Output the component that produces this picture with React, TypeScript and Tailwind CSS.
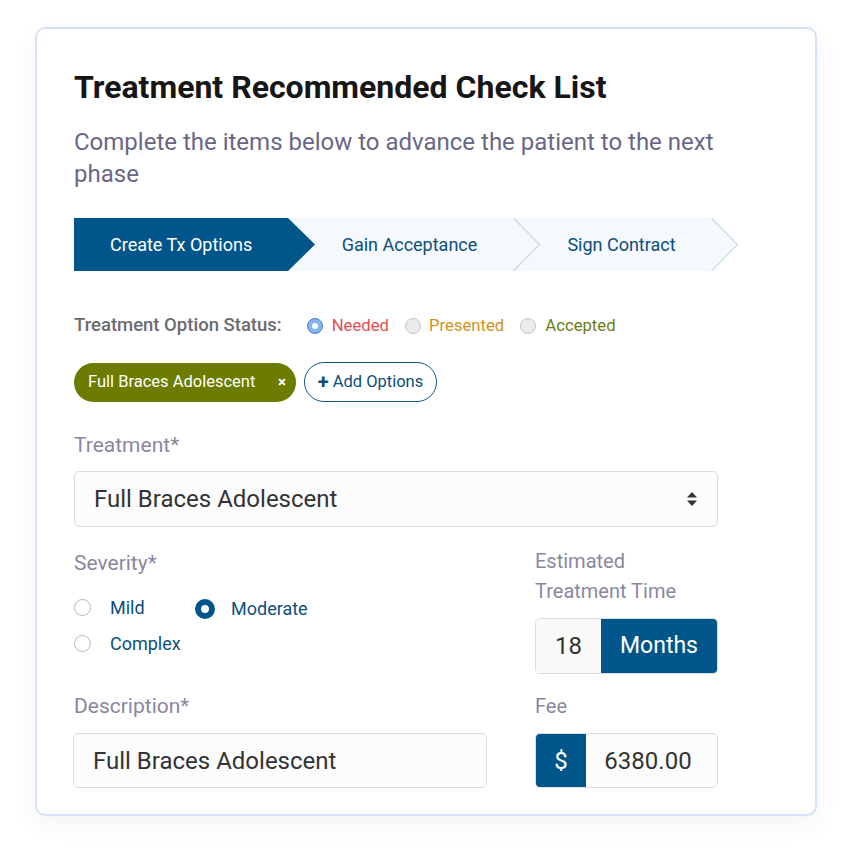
import React from "react";

const Radio = ({ checked, variant }: { checked?: boolean; variant: "light" | "dark" | "plain" }) => {
  if (variant === "light") {
    return checked ? (
      <span className="inline-flex h-[16px] w-[16px] shrink-0 items-center justify-center rounded-full border border-[#3f7fd0] bg-[#86b6ef]">
        <span className="h-[6px] w-[6px] rounded-full bg-white" />
      </span>
    ) : (
      <span className="inline-block h-[16px] w-[16px] shrink-0 rounded-full border border-[#c4c4c9] bg-[#ebebee]" />
    );
  }
  if (variant === "dark") {
    return <span className="inline-block h-[20px] w-[20px] shrink-0 rounded-full border-[6px] border-[#00568a] bg-white" />;
  }
  return <span className="inline-block h-[17px] w-[17px] shrink-0 rounded-full border border-[#b5b5b5] bg-white" />;
};

export default function App() {
  return (
    <div className="min-h-[862px] w-[852px] bg-white pl-[35px] pt-[27px]" style={{ fontFamily: "Roboto, 'Noto Sans', sans-serif" }}>
      <div className="h-[789px] w-[782px] rounded-[10px] border-2 border-[#d7e2f8] bg-white pl-[37px] pt-[39px] shadow-[0_8px_24px_rgba(30,50,90,0.06)]">
        <h1 className="text-[32px] font-bold leading-[38px] text-[#161616]">Treatment Recommended Check List</h1>
        <p className="mt-[20px] w-[690px] text-[24px] leading-[32px] text-[#6a6785]">
          Complete the items below to advance the patient to the next phase
        </p>

        {/* Stepper */}
        <div className="mt-[28px] flex h-[53px] w-[664px]">
          <div className="flex h-[53px] w-[241px] items-center bg-[#f5f8fc]">
            <div className="flex h-[53px] w-[241px] items-center bg-[#00568a] pl-[36px] text-[18px] text-white [clip-path:polygon(0_0,214px_0,100%_50%,214px_100%,0_100%)]">
              Create Tx Options
            </div>
          </div>
          <div className="flex h-[53px] w-[198px] items-center justify-center bg-[#f5f8fc] pr-[9px] text-[18px] text-[#0d4f7a]">
            Gain Acceptance
          </div>
          <svg width="27" height="53" viewBox="0 0 27 53" className="shrink-0">
            <rect x="0" y="0" width="27" height="53" fill="#f5f8fc" />
            <polyline points="0.5,0 26.5,26.5 0.5,53" fill="none" stroke="#c3dbe4" strokeWidth="1.2" />
          </svg>
          <div className="flex h-[53px] w-[171px] items-center justify-center bg-[#f5f8fc] pr-[8px] text-[18px] text-[#0d4f7a]">
            Sign Contract
          </div>
          <svg width="27" height="53" viewBox="0 0 27 53" className="shrink-0">
            <polygon points="0,0 26.5,26.5 0,53" fill="#f5f8fc" />
            <polyline points="0.5,0 26.5,26.5 0.5,53" fill="none" stroke="#c3dbe4" strokeWidth="1.2" />
          </svg>
        </div>

        {/* Status */}
        <div className="mt-[44px] flex h-[22px] items-center">
          <span className="text-[18.5px] font-medium text-[#6b6b70]">Treatment Option Status:</span>
          <span className="ml-[25px] flex items-center text-[16.7px]">
            <Radio variant="light" checked />
            <span className="ml-[9px] text-[#e0524f]">Needed</span>
          </span>
          <span className="ml-[16px] flex items-center text-[16.7px]">
            <Radio variant="light" />
            <span className="ml-[8px] text-[#d3921d]">Presented</span>
          </span>
          <span className="ml-[16px] flex items-center text-[16.7px]">
            <Radio variant="light" />
            <span className="ml-[9px] text-[#6a7d12]">Accepted</span>
          </span>
        </div>

        {/* Pills */}
        <div className="mt-[25px] flex items-center gap-[8px]">
          <div className="flex h-[39px] w-[222px] items-center justify-between rounded-full bg-[#6b7c00] pl-[14px] pr-[10px] text-[16.5px] text-white">
            <span>Full Braces Adolescent</span>
            <span className="text-[15px] font-bold">×</span>
          </div>
          <div className="flex h-[40px] w-[133px] items-center justify-center rounded-full border border-[#0b5a8a] text-[16.5px] text-[#0b4f7c]">
            <span className="mr-[4px] text-[20px] font-bold leading-none">+</span>Add Options
          </div>
        </div>

        {/* Treatment */}
        <div className="mt-[31px] text-[21px] leading-[24px] text-[#8a879f]">Treatment*</div>
        <div className="mt-[14px] flex h-[56px] w-[644px] items-center justify-between rounded-[5px] border border-[#dcdcdc] bg-[#fcfcfc] pl-[19px] pr-[20px] text-[24px] text-[#333]">
          <span>Full Braces Adolescent</span>
          <svg width="10" height="14" viewBox="0 0 10 14">
            <polygon points="5,0 10,5.5 0,5.5" fill="#333" />
            <polygon points="0,8.5 10,8.5 5,14" fill="#333" />
          </svg>
        </div>

        {/* Severity / Time */}
        <div className="mt-[20px] grid grid-cols-[413px_183px] gap-x-[48px]">
          <div>
            <div className="mt-[4px] text-[21px] leading-[24px] text-[#8a879f]">Severity*</div>
            <div className="mt-[22px] flex text-[18px] text-[#0d4f7a]">
              <div className="flex w-[121px] flex-col gap-[15px]">
                <div className="flex h-[21px] items-center">
                  <Radio variant="plain" />
                  <span className="ml-[19px] leading-[21px]">Mild</span>
                </div>
                <div className="flex h-[21px] items-center">
                  <Radio variant="plain" />
                  <span className="ml-[19px] leading-[21px]">Complex</span>
                </div>
              </div>
              <div className="mt-[1px] flex h-[21px] items-center">
                <Radio variant="dark" />
                <span className="ml-[16px] leading-[21px]">Moderate</span>
              </div>
            </div>
          </div>
          <div>
            <div className="-mt-[1px] text-[20px] leading-[30px] text-[#8a879f]">
              Estimated
              <br />
              Treatment Time
            </div>
            <div className="mt-[12px] flex h-[56px] w-[183px] overflow-hidden rounded-[5px] border border-[#dcdcdc]">
              <div className="flex w-[65px] items-center justify-center bg-[#fafafa] text-[24px] text-[#333]">18</div>
              <div className="flex flex-1 items-center justify-center bg-[#00568a] text-[23px] text-white">Months</div>
            </div>
          </div>

          <div className="mt-[20px]">
            <div className="text-[21px] leading-[24px] text-[#8a879f]">Description*</div>
            <div className="-ml-[1px] mt-[15px] flex h-[55px] w-[414px] items-center rounded-[5px] border border-[#dcdcdc] bg-[#fcfcfc] pl-[19px] text-[24px] text-[#333]">
              Full Braces Adolescent
            </div>
          </div>
          <div className="mt-[20px]">
            <div className="text-[20px] leading-[24px] text-[#8a879f]">Fee</div>
            <div className="mt-[15px] flex h-[55px] w-[183px] overflow-hidden rounded-[5px] border border-[#dcdcdc]">
              <div className="flex w-[50px] items-center justify-center bg-[#00568a] text-[24px] text-white">$</div>
              <div className="flex flex-1 items-center justify-center bg-[#fcfcfc] pr-[7px] text-[24px] text-[#333]">6380.00</div>
            </div>
          </div>
        </div>
      </div>
    </div>
  );
}
